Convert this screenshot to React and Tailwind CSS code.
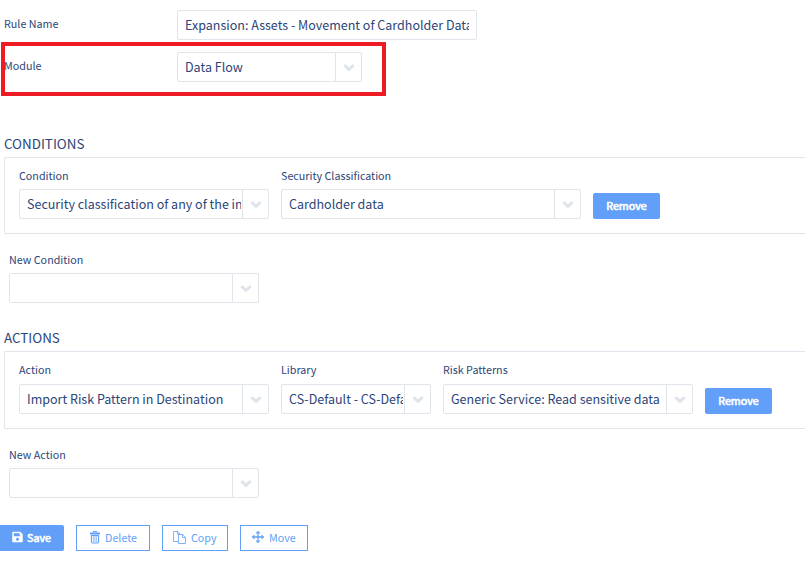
import React from 'react';
import { FaSave } from 'react-icons/fa';

const ChevronIcon = () => (
  <svg className="mt-[2px] h-3 w-3" viewBox="0 0 12 12" fill="none" stroke="currentColor" strokeWidth="3">
    <path d="M1.4 3.2L6 7.4l4.6-4.2" />
  </svg>
);

const TrashIcon = () => (
  <svg className="h-[13px] w-[10px]" viewBox="0 0 10 13" fill="none" stroke="currentColor">
    <path d="M3.2 1.5V.6h3.6v.9" />
    <path d="M0 2.5h10" strokeWidth="2" />
    <path d="M1.5 4.5v6.3q0 1.2 1.2 1.2h4.6q1.2 0 1.2-1.2V4.5z" strokeWidth="1.2" />
    <path d="M3.9 5v6M6.1 5v6" strokeWidth=".9" />
  </svg>
);

const CopyIcon = () => (
  <svg className="h-[13px] w-[13px]" viewBox="0 0 13 13" fill="none" stroke="currentColor" strokeWidth=".8">
    <path d="M5 10.5H.5V.5h4l2.5 2.5" />
    <path d="M4.5.5v2.7h3" />
    <path d="M5.5 3.5h4.2l2.8 2.8v6.2h-7z" />
    <path d="M9.5 3.5v3h3" />
  </svg>
);

const MoveIcon = () => (
  <svg className="h-3 w-3" viewBox="0 0 12 12" fill="none" stroke="currentColor">
    <path d="M6 .8v10.4M.8 6h10.4" strokeWidth="1.3" />
    <path d="M4.2 2.4L6 .6l1.8 1.8M4.2 9.6L6 11.4l1.8-1.8M2.4 4.2L.6 6l1.8 1.8M9.6 4.2L11.4 6 9.6 7.8" strokeWidth="1.1" />
  </svg>
);

const Select = ({ value, width }) => (
  <div className={`flex h-[30px] rounded-[2px] border border-[#dfe5ea] bg-white ${width}`}>
    <div className="min-w-0 flex-1 pl-[7px] pr-px">
      <div className="overflow-hidden whitespace-nowrap text-[12.53px] leading-[27px]">{value}</div>
    </div>
    <div className="flex w-[26px] items-center justify-center border-l border-[#dfe5ea] text-[#dfe5ea]">
      <ChevronIcon />
    </div>
  </div>
);

const Field = ({ label, value, width, gap = 'mb-[5px]' }) => (
  <div>
    <div className={`pt-px text-[10.74px] leading-4 ${gap}`}>{label}</div>
    <Select value={value} width={width} />
  </div>
);

const RemoveButton = () => (
  <button className="mt-[26px] h-[26px] w-[67px] rounded-[2px] bg-[#629ff8] text-[10.74px] leading-[26px] text-white [-webkit-text-stroke:0.6px_white]">
    Remove
  </button>
);

const OutlineButton = ({ icon, label, width }) => (
  <button className={`flex h-[26px] border border-[#629ff8] text-[10.74px] leading-6 text-[#629ff8] ${width}`}>
    <span className="mr-[5px] mt-[5px]">{icon}</span>
    {label}
  </button>
);

const App = () => {
  return (
    <div className="relative h-[577px] w-[805px] overflow-hidden bg-white font-['Noto_Sans_CJK_SC',sans-serif] text-[#2c4578]">
      {/* Rule details */}
      <div className="flex pl-1 pt-[10px]">
        <div className="w-[173px] pt-[6px] text-[10.74px] leading-4">Rule Name</div>
        <div className="h-[30px] w-[300px] rounded-[2px] border border-[#dfe5ea] px-[7px]">
          <div className="overflow-hidden whitespace-nowrap text-[12.53px] leading-[27px]">
            Expansion: Assets - Movement of Cardholder Data
          </div>
        </div>
      </div>
      <div className="flex pl-1 pt-3">
        <div className="w-[173px] pt-[6px] text-[10.74px] leading-4">Module</div>
        <Select value="Data Flow" width="w-[185px]" />
      </div>

      {/* Highlight around the module row */}
      <div className="absolute left-[1px] top-[42px] h-[54px] w-[385px] border-4 border-[#ed1c24]" />

      {/* Conditions */}
      <div className="ml-1 mt-[51px] h-6 text-[13.4px] leading-5">CONDITIONS</div>
      <div className="ml-1 flex h-[77px] gap-3 rounded-l-[2px] border border-r-0 border-[#dfe5ea] pl-[14px] pt-[9px]">
        <Field label="Condition" value="Security classification of any of the in" width="w-[250px]" />
        <Field label="Security Classification" value="Cardholder data" width="w-[300px]" />
        <RemoveButton />
      </div>
      <div className="ml-[9px] mt-[17px]">
        <Field label="New Condition" value="" width="w-[250px]" />
      </div>

      {/* Actions */}
      <div className="ml-1 mt-6 h-6 text-[13.4px] leading-5">ACTIONS</div>
      <div className="ml-1 flex h-[78px] gap-3 rounded-l-[2px] border border-r-0 border-[#dfe5ea] pl-[14px] pt-[9px]">
        <Field label="Action" value="Import Risk Pattern in Destination" width="w-[250px]" gap="mb-[6px]" />
        <Field label="Library" value="CS-Default - CS-Defa" width="w-[150px]" gap="mb-[6px]" />
        <Field label="Risk Patterns" value="Generic Service: Read sensitive data" width="w-[250px]" gap="mb-[6px]" />
        <div className="pt-px">
          <RemoveButton />
        </div>
      </div>
      <div className="ml-[9px] mt-[17px]">
        <Field label="New Action" value="" width="w-[250px]" />
      </div>

      {/* Footer buttons */}
      <div className="mt-[27px] flex gap-3">
        <button className="flex h-[26px] w-16 rounded-r-[2px] bg-[#629ff8] pl-3 text-[10.74px] leading-[26px] text-white [-webkit-text-stroke:0.6px_white]">
          <FaSave className="mr-1 mt-[6px] h-3 w-[11px] [stroke-width:0]" />
          Save
        </button>
        <OutlineButton icon={<TrashIcon />} label="Delete" width="w-[74px] pl-[13px]" />
        <OutlineButton icon={<CopyIcon />} label="Copy" width="w-[66px] pl-[10px]" />
        <OutlineButton icon={<MoveIcon />} label="Move" width="w-[68px] pl-[11px]" />
      </div>
    </div>
  );
};

export default App;
